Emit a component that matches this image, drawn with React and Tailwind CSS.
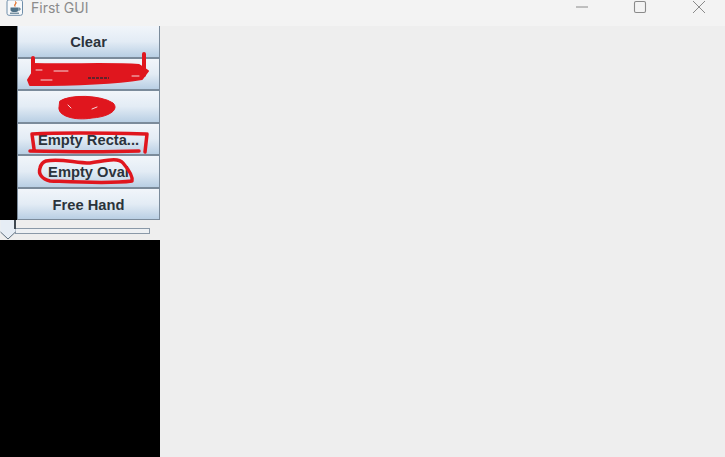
const buttons = ["Clear", "Filled Recta...", "Oval", "Empty Recta...", "Empty Oval", "Free Hand"];

function JavaIcon() {
  return (
    <svg width="18" height="18" viewBox="0 0 18 18" className="ml-[6px]">
      <rect x="1" y="0.8" width="15.5" height="15.5" rx="2" fill="#f7f9fb" stroke="#6f8eaa" />
      <path d="M9.5 2.5C11 4.5 7.5 5 9 7.5C8 5.8 11.5 5 9.5 2.5Z" fill="#e2702a" stroke="#e2702a" strokeWidth="0.8" />
      <path d="M4.5 8.5H12.5V11C12.5 12.5 11 13 8.5 13C6 13 4.5 12.5 4.5 11Z" fill="#4f7187" />
      <path d="M12.5 9.2H14V11H12.3" fill="none" stroke="#4f7187" />
      <path d="M4 14.2H13" stroke="#4f7187" strokeWidth="1.1" />
    </svg>
  );
}

export default function App() {
  return (
    <div className="relative flex h-[457px] w-[725px] flex-col overflow-hidden bg-[#eeeeee] font-['Liberation_Sans',Arial,sans-serif]">
      <header className="flex h-[26px] items-center bg-[#f3f3f3]">
        <div className="-mt-[10px] flex items-center">
          <JavaIcon />
          <span className="ml-[7px] font-['Inter','Noto_Sans',sans-serif] text-[14px] leading-4 text-[#8c8c8c]">First GUI</span>
        </div>
        <div className="ml-auto flex items-center">
          <svg width="14" height="14" viewBox="0 0 14 14" className="mr-[44px] -mt-[13px]">
            <path d="M1 7H13" stroke="#8a8a8a" strokeWidth="1" />
          </svg>
          <svg width="14" height="14" viewBox="0 0 14 14" className="mr-[45px] -mt-[13px]">
            <rect x="1.5" y="1.5" width="11" height="11" rx="1.5" fill="none" stroke="#8a8a8a" strokeWidth="1.1" />
          </svg>
          <svg width="14" height="14" viewBox="0 0 14 14" className="mr-[19px] -mt-[13px]">
            <path d="M1 1L13 13M13 1L1 13" stroke="#8a8a8a" strokeWidth="1" />
          </svg>
        </div>
      </header>

      <div className="flex min-h-0 flex-1">
        <aside className="flex w-[160px] flex-col bg-black">
          <div className="ml-[17px] flex h-[194px] flex-col">
            {buttons.map((label) => (
              <button
                key={label}
                className="flex min-h-0 flex-1 items-center justify-center border-x border-b-2 border-[#7b8b9b] bg-gradient-to-b from-[#f1f5fa] via-[#e3ecf5] to-[#b9cfe4] pt-[3px] text-[14.7px] font-bold leading-none text-[#2b333b] last:border-b"
              >
                {label}
              </button>
            ))}
          </div>
          <div className="relative flex h-[20px] items-start bg-[#eeeeee] pl-[15px] pt-[8px]">
            <div className="h-[6px] w-[135px] border border-[#8a99a8] bg-[#eef1f4]" />
            <svg width="16" height="20" viewBox="0 0 16 20" className="absolute left-0 top-0">
              <path d="M0.5 0V12L8 19L15.5 12V0Z" fill="#e6edf5" />
              <path d="M0.5 12L8 19L15.5 12" fill="none" stroke="#5d6d7c" strokeWidth="1" />
              <path d="M15 0V9" stroke="#2d3640" strokeWidth="1.8" />
            </svg>
          </div>
          <div className="flex-1 bg-black" />
        </aside>
        <main className="flex-1 bg-[#eeeeee]" />
      </div>

      <svg width="160" height="200" viewBox="0 0 160 200" className="pointer-events-none absolute left-0 top-0">
        <g fill="#e0161e" stroke="#e0161e" strokeLinecap="round" strokeLinejoin="round">
          <path d="M33 64C70 65 110 63 139 65L148 71L142 79C110 84 60 85 30 85L28 80L33 72Z" strokeWidth="2" />
          <path d="M33 58V83M144 54V75" fill="none" strokeWidth="4" />
          <path d="M60 101C70 94 101 95 113 103C120 110 108 117 92 118C75 121 57 116 59 107Z" strokeWidth="1" />
          <path d="M32 134C70 132 110 133 146 134M32 134L34 149M147 134L145 152M30 151C70 152 110 152 139 151" fill="none" strokeWidth="3.5" />
          <path d="M46 161C60 158 75 163 90 163C105 161 118 157 123 163C129 170 133 176 132 181C110 184 75 182 50 181C42 179 38 174 40 168C41 164 43 162 46 161Z" fill="none" strokeWidth="3.5" />
        </g>
        <g fill="none" stroke="#f3d9dc" strokeWidth="1" strokeLinecap="round">
          <path d="M36 70H42M54 71H68M41 80H52M132 76H139M68 105L71 108M92 109L97 107" />
        </g>
        <path d="M88 78H109" stroke="#3a2a30" strokeWidth="1.5" strokeDasharray="3 1" />
      </svg>
    </div>
  );
}
